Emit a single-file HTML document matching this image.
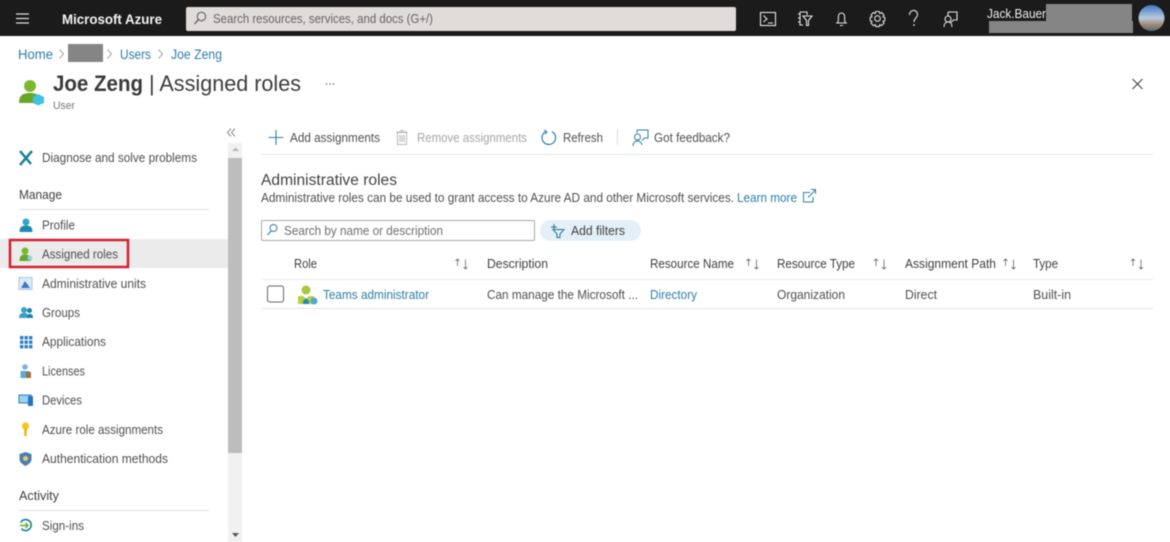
<!DOCTYPE html>
<html lang="en">
<head>
<meta charset="utf-8">
<title>Joe Zeng | Assigned roles</title>
<style>
html,body{margin:0;padding:0;background:#fff;width:1170px;height:542px;overflow:hidden}
#wrap{position:relative;width:1170px;height:542px;overflow:hidden;contain:paint}
svg{display:block;position:absolute;left:-10px;top:-10px;filter:blur(.45px)}
text{font-family:"Liberation Sans",sans-serif;font-size:12.5px;fill:#505050}
.l{fill:#2f7ea8}
.h{fill:#404040}
.d{fill:#a6a6a6}
.i{fill:none;stroke:#e4e4e4;stroke-width:1.1}
</style>
</head>
<body>
<div id="wrap">
<svg width="1190" height="562" viewBox="-10 -10 1190 562" xmlns="http://www.w3.org/2000/svg">
<rect x="-10" y="-10" width="1190" height="562" fill="#fff"/>
<!-- top bar -->
<rect x="-10" y="-10" width="1190" height="46" fill="#1b1b1b"/>
<path d="M16 14h13M16 18.500h13M16 23h13" stroke="#ddd" stroke-width="1.300" fill="none"/>
<text x="62" y="24" textLength="100" lengthAdjust="spacingAndGlyphs" style="font-size:14px;font-weight:700;fill:#f4f4f4">Microsoft Azure</text>
<rect x="186" y="7" width="550" height="24" rx="2" fill="#dfdcd9"/>
<circle cx="201.500" cy="16.500" r="4.200" fill="none" stroke="#555" stroke-width="1"/>
<path d="M198.500 19.500l-4 4.500" stroke="#555" stroke-width="1.200"/>
<text x="213" y="23" textLength="220" lengthAdjust="spacingAndGlyphs" style="fill:#666">Search resources, services, and docs (G+/)</text>
<!-- top icons -->
<g class="i">
<rect x="760.500" y="12.500" width="15" height="13"/>
<path d="M763.500 15.500l3.500 3.500-3.500 3M768 23h5"/>
<path d="M800 12h7v3M800 12v13h3M798 14h2M798 18h2M798 22h2M803 16h9l-3.500 4.500v5h-2v-5z"/>
<path d="M836 23h11M837.500 23c1.500-2 .5-4 1-7a3 3 0 0 1 6 0c.5 3-.5 5 1 7M840 25.500h3"/>
<circle cx="877.500" cy="18.500" r="2.800"/>
<path d="M875.800 11.500h3.400l.6 2 1.800-.9 2.300 2.300-.9 1.900 1.800.7v3.200l-1.800.7.9 1.900-2.300 2.300-1.800-.9-.6 1.900h-3.400l-.6-1.900-1.800.9-2.300-2.300.9-1.900-1.800-.7v-3.200l1.800-.7-.9-1.900 2.300-2.300 1.800.9z"/>
<path d="M909.500 15c0-6 8-6 8 -.5 0 3.500-3.500 3.500-3.500 7.500"/>
<path d="M948 12h9v8h-3.500l-2.500 2.500M948 12v4"/>
<circle cx="948" cy="19" r="3"/>
<path d="M944 27c0-3 1.500-5 4-5s4 2 4 5"/>
</g>
<circle cx="914" cy="25" r=".9" fill="#e4e4e4"/>
<text x="987" y="18" textLength="59" lengthAdjust="spacingAndGlyphs" style="fill:#eee;font-size:13px">Jack.Bauer</text>
<rect x="1046" y="4" width="86" height="18" fill="#858585"/>
<rect x="989" y="21" width="144" height="12" fill="#858585"/>
<defs>
<linearGradient id="av" x1="0" y1="0" x2="0" y2="1"><stop offset="0" stop-color="#3f76c4"/><stop offset=".5" stop-color="#b7cbe0"/><stop offset=".75" stop-color="#a58b72"/><stop offset="1" stop-color="#4e6d80"/></linearGradient>
</defs>
<circle cx="1151.500" cy="18" r="13" fill="url(#av)"/>

<!-- breadcrumb -->
<text x="18" y="59" textLength="35" lengthAdjust="spacingAndGlyphs" class="l" style="font-size:13.500px">Home</text>
<path d="M59.500 49.500l4 4.500-4 4.500M107.500 49.500l4 4.500-4 4.500M158.500 49.500l4 4.500-4 4.500" fill="none" stroke="#a5a5a5"/>
<rect x="68" y="44" width="35" height="18" fill="#858585"/>
<text x="120" y="59" textLength="31" lengthAdjust="spacingAndGlyphs" class="l" style="font-size:13.500px">Users</text>
<text x="171" y="59" textLength="51" lengthAdjust="spacingAndGlyphs" class="l" style="font-size:13.500px">Joe Zeng</text>

<!-- header -->
<circle cx="30" cy="86" r="6" fill="#7cb82f"/>
<path d="M19 103c0-8 4-10 11-10s10 2 11 10z" fill="#69a52a"/>
<path d="M38 94l6 3v6l-6 2.500-5-2.500v-6z" fill="#3fc3e0"/>
<text x="53" y="91" textLength="90" lengthAdjust="spacingAndGlyphs" style="font-size:22px;font-weight:700;fill:#3a3a3a">Joe Zeng</text>
<text x="149" y="91" textLength="152" lengthAdjust="spacingAndGlyphs" style="font-size:22px;fill:#3c3c3c">| Assigned roles</text>
<text x="53" y="109" textLength="22" lengthAdjust="spacingAndGlyphs" style="font-size:11px;fill:#777">User</text>
<g fill="#666"><circle cx="326.500" cy="84" r=".8"/><circle cx="330" cy="84" r=".8"/><circle cx="333.500" cy="84" r=".8"/></g>
<path d="M1132.500 79l10 10M1142.500 79l-10 10" stroke="#444" stroke-width="1.100"/>

<!-- sidebar -->
<path d="M231 128.500l-3.500 4 3.500 4M235 128.500l-3.500 4 3.500 4" fill="none" stroke="#888"/>
<rect x="228" y="143" width="14" height="409" fill="#f1f1f1"/>
<rect x="228" y="158" width="14" height="295" fill="#bdbdbd"/>
<path d="M232 151l3.500-3.500 3.500 3.500z" fill="#b5b5b5"/>
<path d="M232 533h7l-3.500 4z" fill="#555"/>
<rect x="-10" y="239" width="238" height="29" fill="#ebebeb"/>
<path d="M20 151l11 13M32 151l-12 14" stroke="#1b7f9e" stroke-width="2.500"/>
<text x="42" y="162" textLength="155" lengthAdjust="spacingAndGlyphs">Diagnose and solve problems</text>
<text x="19" y="199" textLength="43" lengthAdjust="spacingAndGlyphs" class="h">Manage</text>
<rect x="19" y="209" width="190" height="1" fill="#ddd"/>
<circle cx="26" cy="222" r="3.500" fill="#36a3c9"/>
<path d="M19.500 232c0-5 2-6.500 6.500-6.500s6.500 1.500 6.500 6.500z" fill="#1f8ab0"/>
<text x="42" y="229.500" textLength="33" lengthAdjust="spacingAndGlyphs">Profile</text>
<circle cx="25" cy="251" r="3.500" fill="#7cb82f"/>
<path d="M19.500 261c0-5 2-6.500 5.500-6.500s6 1.500 6 6.500z" fill="#69a52a"/>
<circle cx="30" cy="258" r="2.500" fill="#8fd3e8"/>
<text x="42" y="258.500" textLength="76" lengthAdjust="spacingAndGlyphs">Assigned roles</text>
<rect x="10" y="240" width="118" height="27" fill="none" stroke="#d3202f" stroke-width="2.500"/>
<rect x="19" y="277.500" width="13" height="12" fill="#dcebf7" stroke="#a8c6e0"/>
<path d="M21 288l4-7 5 7z" fill="#3c78c3"/>
<text x="42" y="288" textLength="104" lengthAdjust="spacingAndGlyphs">Administrative units</text>
<circle cx="24" cy="310" r="3" fill="#36a3c9"/><circle cx="29.500" cy="310.500" r="2.500" fill="#1f7fa5"/>
<path d="M19 318c0-4 2-5 5-5s5 1 5 5z" fill="#36a3c9"/><path d="M27 318c0-3 1-4 3-4s3 1 3 4z" fill="#1f7fa5"/>
<text x="42" y="317" textLength="38" lengthAdjust="spacingAndGlyphs">Groups</text>
<g fill="#2a7fc4">
<rect x="20" y="336" width="3.400" height="3.400"/><rect x="24.500" y="336" width="3.400" height="3.400"/><rect x="29" y="336" width="3.400" height="3.400"/>
<rect x="20" y="340.500" width="3.400" height="3.400"/><rect x="24.500" y="340.500" width="3.400" height="3.400"/><rect x="29" y="340.500" width="3.400" height="3.400"/>
<rect x="20" y="345" width="3.400" height="3.400"/><rect x="24.500" y="345" width="3.400" height="3.400"/><rect x="29" y="345" width="3.400" height="3.400"/>
</g>
<text x="42" y="346" textLength="64" lengthAdjust="spacingAndGlyphs">Applications</text>
<circle cx="25" cy="367" r="2.800" fill="#7cb4d8"/>
<rect x="20.500" y="371" width="9" height="7" fill="#5aa9d6"/>
<rect x="26" y="372" width="5" height="6" fill="#a0703c"/>
<text x="42" y="375.500" textLength="43" lengthAdjust="spacingAndGlyphs">Licenses</text>
<rect x="19" y="395" width="12" height="8" fill="#9fd0ee" stroke="#2a7fc4"/>
<rect x="28" y="396" width="5" height="10" rx=".5" fill="#1e78c8"/>
<text x="42" y="404.500" textLength="40" lengthAdjust="spacingAndGlyphs">Devices</text>
<circle cx="25.500" cy="426" r="3.600" fill="#f5c518"/>
<rect x="24.200" y="428" width="2.600" height="8" fill="#eeb70f"/>
<text x="42" y="434" textLength="121" lengthAdjust="spacingAndGlyphs">Azure role assignments</text>
<path d="M25.500 452l6 2v5c0 3.500-3 5.500-6 7-3-1.500-6-3.500-6-7v-5z" fill="#4a7fb5"/>
<circle cx="25.500" cy="458.500" r="2.500" fill="#efc75e"/>
<text x="42" y="463" textLength="126" lengthAdjust="spacingAndGlyphs">Authentication methods</text>
<text x="19" y="500" textLength="40" lengthAdjust="spacingAndGlyphs" class="h">Activity</text>
<rect x="19" y="510" width="190" height="1" fill="#ddd"/>
<path d="M20.800 522.500a5.500 5.500 0 1 1 .6 6" fill="none" stroke="#1b7f9e" stroke-width="1.600"/>
<path d="M20 525.500h8M25.500 523l2.500 2.500-2.500 2.500" fill="none" stroke="#6fae2e" stroke-width="1.500"/>
<text x="42" y="530" textLength="42" lengthAdjust="spacingAndGlyphs">Sign-ins</text>

<!-- toolbar -->
<path d="M276 130v15M268.500 137.500h15" stroke="#2f7ea8" stroke-width="1.100"/>
<text x="290" y="142" textLength="90" lengthAdjust="spacingAndGlyphs">Add assignments</text>
<path d="M397.500 132.500h9v12h-9zM396.500 132h11M400 130.500h4M400 135v7M402 135v7M404 135v7" fill="none" stroke="#b5b5b5"/>
<text x="417" y="142" textLength="110" lengthAdjust="spacingAndGlyphs" class="d">Remove assignments</text>
<path d="M546 131.500a6.800 6.800 0 1 0 6 .2" fill="none" stroke="#2f7ea8" stroke-width="1.200"/>
<path d="M544 130l3 1.800-1.800 2.600" fill="none" stroke="#2f7ea8"/>
<text x="563" y="142" textLength="40" lengthAdjust="spacingAndGlyphs">Refresh</text>
<rect x="617" y="129" width="1" height="16" fill="#ddd"/>
<g fill="none" stroke="#2f7ea8" stroke-width="1">
<path d="M637 130h11v8h-3.500l-2.500 2.500M637 130v3"/>
<circle cx="637.500" cy="137" r="3"/>
<path d="M633 146c0-3 2-5 4.500-5s4 1.500 4.500 4"/>
</g>
<text x="654" y="142" textLength="76" lengthAdjust="spacingAndGlyphs">Got feedback?</text>
<rect x="261" y="154" width="892" height="1" fill="#e3e3e3"/>

<!-- content -->
<text x="261" y="185" textLength="136" lengthAdjust="spacingAndGlyphs" style="font-size:15.500px;fill:#444">Administrative roles</text>
<text x="261" y="202" textLength="473" lengthAdjust="spacingAndGlyphs">Administrative roles can be used to grant access to Azure AD and other Microsoft services.</text>
<text x="737" y="202" textLength="60" lengthAdjust="spacingAndGlyphs" class="l">Learn more</text>
<path d="M810 192.500h-6.500v9.500h9.500v-5M808 197.500l7.500-7.500M811 189.500h4.500v4.500" fill="none" stroke="#2f7ea8"/>

<rect x="261.500" y="220.500" width="273" height="20" rx="1.500" fill="#fff" stroke="#a8a8a8"/>
<circle cx="273.500" cy="228" r="3.500" fill="none" stroke="#2f7ea8"/>
<path d="M271 231l-3.500 4" stroke="#2f7ea8" stroke-width="1.100"/>
<text x="284" y="235" textLength="159" lengthAdjust="spacingAndGlyphs" style="fill:#6f6f6f">Search by name or description</text>
<rect x="540" y="220" width="101" height="21" rx="10.500" fill="#e4f0f8"/>
<path d="M554 224v6M551 227h6M553 229.500h11l-4 4.500v3.500h-3v-3.500z" fill="none" stroke="#2f6f94"/>
<text x="571" y="235" textLength="54" lengthAdjust="spacingAndGlyphs" class="h">Add filters</text>

<!-- table head -->
<text x="294" y="268" textLength="23" lengthAdjust="spacingAndGlyphs" class="h">Role</text>
<text x="487" y="268" textLength="61" lengthAdjust="spacingAndGlyphs" class="h">Description</text>
<text x="650" y="268" textLength="84" lengthAdjust="spacingAndGlyphs" class="h">Resource Name</text>
<text x="777" y="268" textLength="78" lengthAdjust="spacingAndGlyphs" class="h">Resource Type</text>
<text x="905" y="268" textLength="91" lengthAdjust="spacingAndGlyphs" class="h">Assignment Path</text>
<text x="1033" y="268" textLength="25" lengthAdjust="spacingAndGlyphs" class="h">Type</text>
<defs>
<g id="s" fill="none" stroke="#666" stroke-width=".8">
<path d="M3 8V1M1 3L3 1l2 2M11 1.500v9.500M9 9l2 2 2-2"/>
</g>
</defs>
<use href="#s" x="454.500" y="258"/>
<use href="#s" x="745.500" y="258"/>
<use href="#s" x="873" y="258"/>
<use href="#s" x="1002.500" y="258"/>
<use href="#s" x="1130" y="258"/>
<rect x="261" y="279" width="892" height="1" fill="#ececec"/>

<!-- row -->
<rect x="267.500" y="286" width="16" height="16" rx="2" fill="#fff" stroke="#666"/>
<circle cx="306" cy="290" r="4.500" fill="#a5c93c"/>
<path d="M298 304v-8h5l3 3 3-3h5v8z" fill="#b2d23f"/>
<path d="M306 298l3 3v3h-6v-3z" fill="#1f8ab0"/>
<circle cx="314" cy="301" r="3.500" fill="#4fa8cc"/>
<text x="323" y="299" textLength="106" lengthAdjust="spacingAndGlyphs" class="l">Teams administrator</text>
<text x="487" y="299" textLength="151" lengthAdjust="spacingAndGlyphs">Can manage the Microsoft ...</text>
<text x="650" y="299" textLength="47" lengthAdjust="spacingAndGlyphs" class="l">Directory</text>
<text x="777" y="299" textLength="68" lengthAdjust="spacingAndGlyphs">Organization</text>
<text x="905" y="299" textLength="32" lengthAdjust="spacingAndGlyphs">Direct</text>
<text x="1033" y="299" textLength="38" lengthAdjust="spacingAndGlyphs">Built-in</text>
<rect x="261" y="308" width="892" height="1" fill="#e3e3e3"/>
</svg>
</div>
</body>
</html>
